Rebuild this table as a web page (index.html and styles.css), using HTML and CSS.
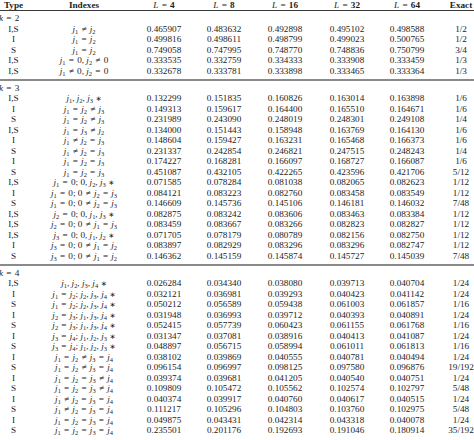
FILE: index.html
```html
<!DOCTYPE html>
<html>
<head>
<meta charset="utf-8">
<link rel="stylesheet" href="styles.css">
</head>
<body>
<div class="table">
  <div class="row head">
    <div>Type</div><div>Indexes</div>
    <div><i>L</i><span class="op">=</span>4</div>
    <div><i>L</i><span class="op">=</span>8</div>
    <div><i>L</i><span class="op">=</span>16</div>
    <div><i>L</i><span class="op">=</span>32</div>
    <div><i>L</i><span class="op">=</span>64</div>
    <div>Exact</div>
  </div>
  <div class="rule thin"></div>

  <section class="group">
    <div class="label"><i>k</i><span class="op">=</span>2</div>
    <div class="row"><div>I,S</div><div class="m"><i>j</i><sub>1</sub><span class="op">≠</span><i>j</i><sub>2</sub></div><div>0.465907</div><div>0.483632</div><div>0.492898</div><div>0.495102</div><div>0.498588</div><div>1/2</div></div>
    <div class="row"><div>I</div><div class="m"><i>j</i><sub>1</sub><span class="op">=</span><i>j</i><sub>2</sub></div><div>0.499816</div><div>0.498611</div><div>0.498799</div><div>0.499023</div><div>0.500765</div><div>1/2</div></div>
    <div class="row"><div>S</div><div class="m"><i>j</i><sub>1</sub><span class="op">=</span><i>j</i><sub>2</sub></div><div>0.749058</div><div>0.747995</div><div>0.748770</div><div>0.748836</div><div>0.750799</div><div>3/4</div></div>
    <div class="row"><div>I,S</div><div class="m"><i>j</i><sub>1</sub><span class="op">=</span>0,<i class="sp">j</i><sub>2</sub><span class="op">≠</span>0</div><div>0.333535</div><div>0.332759</div><div>0.334333</div><div>0.333908</div><div>0.333459</div><div>1/3</div></div>
    <div class="row"><div>I,S</div><div class="m"><i>j</i><sub>1</sub><span class="op">≠</span>0,<i class="sp">j</i><sub>2</sub><span class="op">=</span>0</div><div>0.332678</div><div>0.333781</div><div>0.333898</div><div>0.333465</div><div>0.333364</div><div>1/3</div></div>
  </section>
  <div class="rule thick"></div>

  <section class="group">
    <div class="label"><i>k</i><span class="op">=</span>3</div>
    <div class="row"><div>I,S</div><div class="m"><i>j</i><sub>1</sub>,<i class="sp">j</i><sub>2</sub>,<i class="sp">j</i><sub>3</sub><span class="ast">∗</span></div><div>0.132299</div><div>0.151835</div><div>0.160826</div><div>0.163014</div><div>0.163898</div><div>1/6</div></div>
    <div class="row"><div>I</div><div class="m"><i>j</i><sub>1</sub><span class="op">=</span><i>j</i><sub>2</sub><span class="op">≠</span><i>j</i><sub>3</sub></div><div>0.149313</div><div>0.159617</div><div>0.164400</div><div>0.165510</div><div>0.164671</div><div>1/6</div></div>
    <div class="row"><div>S</div><div class="m"><i>j</i><sub>1</sub><span class="op">=</span><i>j</i><sub>2</sub><span class="op">≠</span><i>j</i><sub>3</sub></div><div>0.231989</div><div>0.243090</div><div>0.248019</div><div>0.248301</div><div>0.249108</div><div>1/4</div></div>
    <div class="row"><div>I,S</div><div class="m"><i>j</i><sub>1</sub><span class="op">=</span><i>j</i><sub>3</sub><span class="op">≠</span><i>j</i><sub>2</sub></div><div>0.134000</div><div>0.151443</div><div>0.158948</div><div>0.163769</div><div>0.164130</div><div>1/6</div></div>
    <div class="row"><div>I</div><div class="m"><i>j</i><sub>1</sub><span class="op">≠</span><i>j</i><sub>2</sub><span class="op">=</span><i>j</i><sub>3</sub></div><div>0.148604</div><div>0.159427</div><div>0.163231</div><div>0.165468</div><div>0.166373</div><div>1/6</div></div>
    <div class="row"><div>S</div><div class="m"><i>j</i><sub>1</sub><span class="op">≠</span><i>j</i><sub>2</sub><span class="op">=</span><i>j</i><sub>3</sub></div><div>0.231337</div><div>0.242854</div><div>0.246821</div><div>0.247515</div><div>0.248243</div><div>1/4</div></div>
    <div class="row"><div>I</div><div class="m"><i>j</i><sub>1</sub><span class="op">=</span><i>j</i><sub>2</sub><span class="op">=</span><i>j</i><sub>3</sub></div><div>0.174227</div><div>0.168281</div><div>0.166097</div><div>0.168727</div><div>0.166087</div><div>1/6</div></div>
    <div class="row"><div>S</div><div class="m"><i>j</i><sub>1</sub><span class="op">=</span><i>j</i><sub>2</sub><span class="op">=</span><i>j</i><sub>3</sub></div><div>0.451087</div><div>0.432105</div><div>0.422265</div><div>0.423596</div><div>0.421706</div><div>5/12</div></div>
    <div class="row"><div>I,S</div><div class="m"><i>j</i><sub>1</sub><span class="op">=</span>0;<span class="sp">0</span>,<i class="sp">j</i><sub>2</sub>,<i class="sp">j</i><sub>3</sub><span class="ast">∗</span></div><div>0.071585</div><div>0.078284</div><div>0.081038</div><div>0.082065</div><div>0.082623</div><div>1/12</div></div>
    <div class="row"><div>I</div><div class="m"><i>j</i><sub>1</sub><span class="op">=</span>0;<span class="sp">0</span><span class="op">≠</span><i>j</i><sub>2</sub><span class="op">=</span><i>j</i><sub>3</sub></div><div>0.084121</div><div>0.083223</div><div>0.082760</div><div>0.083458</div><div>0.083549</div><div>1/12</div></div>
    <div class="row"><div>S</div><div class="m"><i>j</i><sub>1</sub><span class="op">=</span>0;<span class="sp">0</span><span class="op">≠</span><i>j</i><sub>2</sub><span class="op">=</span><i>j</i><sub>3</sub></div><div>0.146609</div><div>0.145736</div><div>0.145106</div><div>0.146181</div><div>0.146032</div><div>7/48</div></div>
    <div class="row"><div>I,S</div><div class="m"><i>j</i><sub>2</sub><span class="op">=</span>0;<span class="sp">0</span>,<i class="sp">j</i><sub>1</sub>,<i class="sp">j</i><sub>3</sub><span class="ast">∗</span></div><div>0.082875</div><div>0.083242</div><div>0.083606</div><div>0.083463</div><div>0.083384</div><div>1/12</div></div>
    <div class="row"><div>I,S</div><div class="m"><i>j</i><sub>2</sub><span class="op">=</span>0;<span class="sp">0</span><span class="op">≠</span><i>j</i><sub>1</sub><span class="op">=</span><i>j</i><sub>3</sub></div><div>0.083459</div><div>0.083667</div><div>0.083266</div><div>0.082823</div><div>0.082827</div><div>1/12</div></div>
    <div class="row"><div>I,S</div><div class="m"><i>j</i><sub>3</sub><span class="op">=</span>0;<span class="sp">0</span>,<i class="sp">j</i><sub>1</sub>,<i class="sp">j</i><sub>2</sub><span class="ast">∗</span></div><div>0.071705</div><div>0.078179</div><div>0.080789</div><div>0.082156</div><div>0.082750</div><div>1/12</div></div>
    <div class="row"><div>I</div><div class="m"><i>j</i><sub>3</sub><span class="op">=</span>0;<span class="sp">0</span><span class="op">≠</span><i>j</i><sub>1</sub><span class="op">=</span><i>j</i><sub>2</sub></div><div>0.083897</div><div>0.082929</div><div>0.083296</div><div>0.083296</div><div>0.082747</div><div>1/12</div></div>
    <div class="row"><div>S</div><div class="m"><i>j</i><sub>3</sub><span class="op">=</span>0;<span class="sp">0</span><span class="op">≠</span><i>j</i><sub>1</sub><span class="op">=</span><i>j</i><sub>2</sub></div><div>0.146362</div><div>0.145159</div><div>0.145874</div><div>0.145727</div><div>0.145039</div><div>7/48</div></div>
  </section>
  <div class="rule thick"></div>

  <section class="group">
    <div class="label"><i>k</i><span class="op">=</span>4</div>
    <div class="row"><div>I,S</div><div class="m"><i>j</i><sub>1</sub>,<i class="sp">j</i><sub>2</sub>,<i class="sp">j</i><sub>3</sub>,<i class="sp">j</i><sub>4</sub><span class="ast">∗</span></div><div>0.026284</div><div>0.034340</div><div>0.038080</div><div>0.039713</div><div>0.040704</div><div>1/24</div></div>
    <div class="row"><div>I</div><div class="m"><i>j</i><sub>1</sub><span class="op">=</span><i>j</i><sub>2</sub>;<i class="sp">j</i><sub>2</sub>,<i class="sp">j</i><sub>3</sub>,<i class="sp">j</i><sub>4</sub><span class="ast">∗</span></div><div>0.032121</div><div>0.036981</div><div>0.039293</div><div>0.040423</div><div>0.041142</div><div>1/24</div></div>
    <div class="row"><div>S</div><div class="m"><i>j</i><sub>1</sub><span class="op">=</span><i>j</i><sub>2</sub>;<i class="sp">j</i><sub>2</sub>,<i class="sp">j</i><sub>3</sub>,<i class="sp">j</i><sub>4</sub><span class="ast">∗</span></div><div>0.050212</div><div>0.056589</div><div>0.059438</div><div>0.061003</div><div>0.061857</div><div>1/16</div></div>
    <div class="row"><div>I</div><div class="m"><i>j</i><sub>2</sub><span class="op">=</span><i>j</i><sub>3</sub>;<i class="sp">j</i><sub>1</sub>,<i class="sp">j</i><sub>3</sub>,<i class="sp">j</i><sub>4</sub><span class="ast">∗</span></div><div>0.031948</div><div>0.036993</div><div>0.039712</div><div>0.040393</div><div>0.040891</div><div>1/24</div></div>
    <div class="row"><div>S</div><div class="m"><i>j</i><sub>2</sub><span class="op">=</span><i>j</i><sub>3</sub>;<i class="sp">j</i><sub>1</sub>,<i class="sp">j</i><sub>3</sub>,<i class="sp">j</i><sub>4</sub><span class="ast">∗</span></div><div>0.052415</div><div>0.057739</div><div>0.060423</div><div>0.061155</div><div>0.061768</div><div>1/16</div></div>
    <div class="row"><div>I</div><div class="m"><i>j</i><sub>3</sub><span class="op">=</span><i>j</i><sub>4</sub>;<i class="sp">j</i><sub>1</sub>,<i class="sp">j</i><sub>2</sub>,<i class="sp">j</i><sub>3</sub><span class="ast">∗</span></div><div>0.031347</div><div>0.037081</div><div>0.038916</div><div>0.040413</div><div>0.041087</div><div>1/24</div></div>
    <div class="row"><div>S</div><div class="m"><i>j</i><sub>3</sub><span class="op">=</span><i>j</i><sub>4</sub>;<i class="sp">j</i><sub>1</sub>,<i class="sp">j</i><sub>2</sub>,<i class="sp">j</i><sub>3</sub><span class="ast">∗</span></div><div>0.048897</div><div>0.056715</div><div>0.058994</div><div>0.061011</div><div>0.061813</div><div>1/16</div></div>
    <div class="row"><div>I</div><div class="m"><i>j</i><sub>1</sub><span class="op">=</span><i>j</i><sub>2</sub><span class="op">≠</span><i>j</i><sub>3</sub><span class="op">=</span><i>j</i><sub>4</sub></div><div>0.038102</div><div>0.039869</div><div>0.040555</div><div>0.040781</div><div>0.040494</div><div>1/24</div></div>
    <div class="row"><div>S</div><div class="m"><i>j</i><sub>1</sub><span class="op">=</span><i>j</i><sub>2</sub><span class="op">≠</span><i>j</i><sub>3</sub><span class="op">=</span><i>j</i><sub>4</sub></div><div>0.096154</div><div>0.096997</div><div>0.098125</div><div>0.097580</div><div>0.096876</div><div>19/192</div></div>
    <div class="row"><div>I</div><div class="m"><i>j</i><sub>1</sub><span class="op">=</span><i>j</i><sub>2</sub><span class="op">=</span><i>j</i><sub>3</sub><span class="op">≠</span><i>j</i><sub>4</sub></div><div>0.039374</div><div>0.039681</div><div>0.041205</div><div>0.040540</div><div>0.040751</div><div>1/24</div></div>
    <div class="row"><div>S</div><div class="m"><i>j</i><sub>1</sub><span class="op">=</span><i>j</i><sub>2</sub><span class="op">=</span><i>j</i><sub>3</sub><span class="op">≠</span><i>j</i><sub>4</sub></div><div>0.109809</div><div>0.105472</div><div>0.105562</div><div>0.102574</div><div>0.102797</div><div>5/48</div></div>
    <div class="row"><div>I</div><div class="m"><i>j</i><sub>1</sub><span class="op">≠</span><i>j</i><sub>2</sub><span class="op">=</span><i>j</i><sub>3</sub><span class="op">=</span><i>j</i><sub>4</sub></div><div>0.040374</div><div>0.039917</div><div>0.040760</div><div>0.040617</div><div>0.040515</div><div>1/24</div></div>
    <div class="row"><div>S</div><div class="m"><i>j</i><sub>1</sub><span class="op">≠</span><i>j</i><sub>2</sub><span class="op">=</span><i>j</i><sub>3</sub><span class="op">=</span><i>j</i><sub>4</sub></div><div>0.111217</div><div>0.105296</div><div>0.104803</div><div>0.103760</div><div>0.102975</div><div>5/48</div></div>
    <div class="row"><div>I</div><div class="m"><i>j</i><sub>1</sub><span class="op">=</span><i>j</i><sub>2</sub><span class="op">=</span><i>j</i><sub>3</sub><span class="op">=</span><i>j</i><sub>4</sub></div><div>0.049875</div><div>0.043431</div><div>0.042314</div><div>0.043318</div><div>0.040078</div><div>1/24</div></div>
    <div class="row"><div>S</div><div class="m"><i>j</i><sub>1</sub><span class="op">=</span><i>j</i><sub>2</sub><span class="op">=</span><i>j</i><sub>3</sub><span class="op">=</span><i>j</i><sub>4</sub></div><div>0.235501</div><div>0.201176</div><div>0.192693</div><div>0.191046</div><div>0.180914</div><div>35/192</div></div>
  </section>
</div>
</body>
</html>
```

FILE: styles.css
```css
html, body {
  margin: 0;
  padding: 0;
  background: #ffffff;
}
body {
  width: 474px;
  height: 440px;
  overflow: hidden;
  font-family: "Liberation Serif", "DejaVu Serif", serif;
  font-size: 9.2px;
  color: #1c1c1c;
}
.table {
  width: 493px;
}
.row {
  display: grid;
  grid-template-columns: 27px 114px 46px 74px 48px 76px 44px 64px;
  height: 10.5px;
  line-height: 10.5px;
  white-space: nowrap;
}
.row > div {
  display: block;
  text-align: center;
}
.head {
  height: 10px;
  line-height: 10px;
  font-weight: bold;
}
.head i {
  font-weight: normal;
}
.head .op {
  font-weight: normal;
}
.rule.thin {
  height: 1px;
  background: #3a3a3a;
}
.rule.thick {
  height: 2px;
  background: #8a8a8a;
}
.group {
  padding: 2px 0 2.5px;
}
.label {
  height: 10.5px;
  line-height: 10.5px;
  margin-left: -1px;
  white-space: nowrap;
}
i {
  font-style: italic;
}
.m .sp {
  margin-left: 0.25em;
}
.op {
  margin: 0 0.35em;
}
sub {
  font-size: 0.7em;
  vertical-align: -0.3em;
  line-height: 0;
}
.ast {
  margin-left: 0.35em;
  font-family: "DejaVu Sans", sans-serif;
  font-size: 0.8em;
}
```
